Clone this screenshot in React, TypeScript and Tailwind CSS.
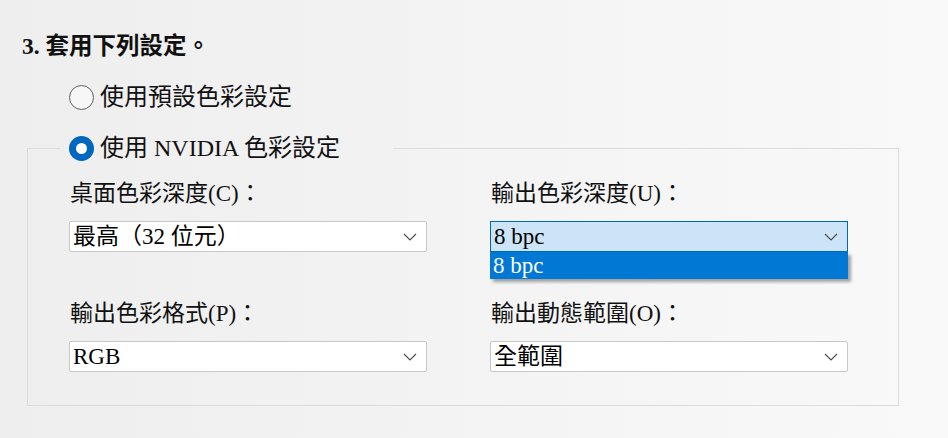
import React from 'react'

const font = "font-['Liberation_Serif','Noto_Sans_CJK_TC',serif]"

function Chevron() {
  return (
    <svg width="14" height="8" viewBox="0 0 14 8" className="shrink-0">
      <path d="M1 1 L7 7 L13 1" fill="none" stroke="#4a4a4a" strokeWidth="1.1" />
    </svg>
  )
}

function Radio({ checked }: { checked?: boolean }) {
  if (checked) {
    return (
      <span className="flex h-[25px] w-[25px] shrink-0 items-center justify-center rounded-full bg-[#0067c0]">
        <span className="h-[11px] w-[11px] rounded-full bg-white" />
      </span>
    )
  }
  return <span className="h-[25px] w-[25px] shrink-0 rounded-full border-[1.5px] border-[#5f5f5f] bg-[#f7f7f7]" />
}

function Select({ value, open }: { value: string; open?: boolean }) {
  return (
    <div className="relative">
      <div
        className={
          open
            ? 'flex h-[31px] items-center justify-between border border-[#0067c0] bg-[#cce4f7] pl-[3px] pr-[9px]'
            : 'flex h-[31px] items-center justify-between rounded-[2px] border border-[#c8c8c8] bg-white pl-[3px] pr-[9px]'
        }
      >
        <span className="text-[23px] leading-none text-black">{value}</span>
        <Chevron />
      </div>
      {open && (
        <div className="absolute left-0 right-0 top-[31px] flex h-[27px] items-center bg-[#0078d4] pl-[3px] shadow-[3px_3px_3px_rgba(0,0,0,0.35)]">
          <span className="text-[23px] leading-none text-white">{value}</span>
        </div>
      )}
    </div>
  )
}

export default function App() {
  return (
    <div className={`h-[438px] w-[948px] overflow-hidden bg-gradient-to-r from-[#eeeeee] to-[#f9f9f9] text-[#111] ${font}`}>
      <div className="pl-[22px] pt-[31px] text-[23.5px] font-bold leading-[30px]">3. 套用下列設定。</div>

      <div className="ml-[69px] mt-[21px] flex h-[30px] items-center gap-[6px] text-[24px] leading-[30px]">
        <Radio />
        <span>使用預設色彩設定</span>
      </div>

      <fieldset className="mx-[27px] mt-[21px] w-[872px] border border-[#dcdcdc] pb-[33px] pl-[41px] pr-[50px]">
        <legend className="-ml-[9px] pl-[9px] pr-[53px]">
          <div className="flex h-[30px] items-center gap-[6px] text-[24px] leading-[30px]">
            <Radio checked />
            <span>使用 NVIDIA 色彩設定</span>
          </div>
        </legend>

        <div className="grid grid-cols-2 gap-x-[63px]">
          <div className="mt-[16px]">
            <div className="pl-[1px] text-[23px] leading-[30px]">桌面色彩深度(C)：</div>
            <div className="mt-[12px]">
              <Select value="最高（32 位元）" />
            </div>
          </div>
          <div className="mt-[16px]">
            <div className="pl-[1px] text-[23px] leading-[30px]">輸出色彩深度(U)：</div>
            <div className="mt-[12px]">
              <Select value="8 bpc" open />
            </div>
          </div>
          <div className="mt-[47px]">
            <div className="pl-[1px] text-[23px] leading-[30px]">輸出色彩格式(P)：</div>
            <div className="mt-[12px]">
              <Select value="RGB" />
            </div>
          </div>
          <div className="mt-[47px]">
            <div className="pl-[1px] text-[23px] leading-[30px]">輸出動態範圍(O)：</div>
            <div className="mt-[12px]">
              <Select value="全範圍" />
            </div>
          </div>
        </div>
      </fieldset>
    </div>
  )
}
